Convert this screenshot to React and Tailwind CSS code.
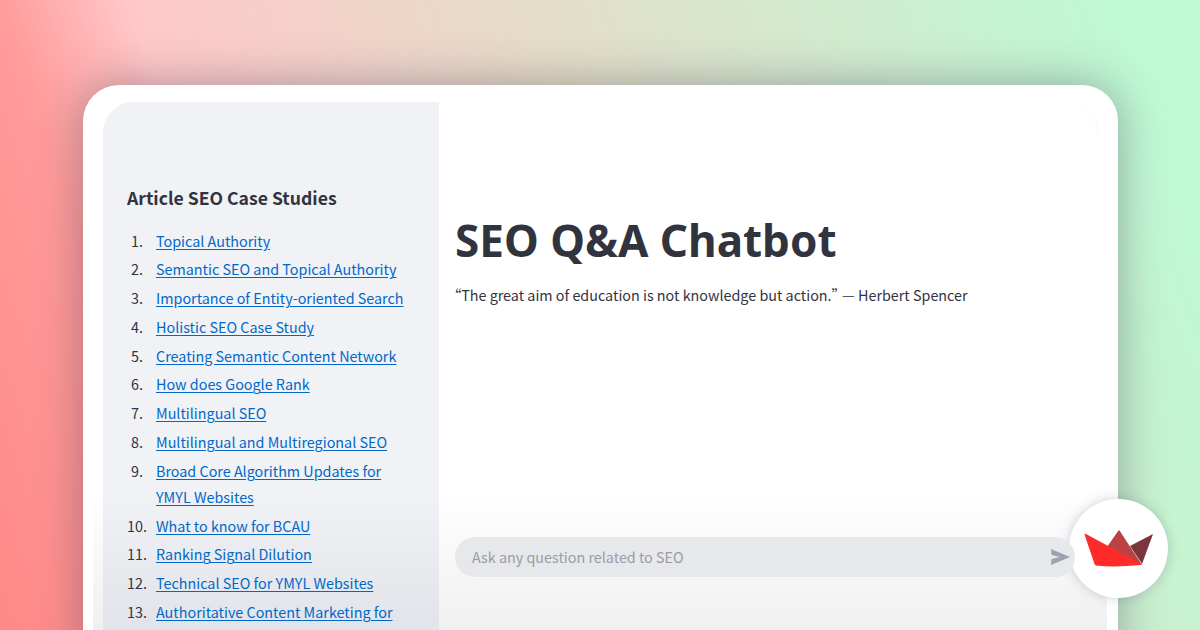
const articles = [
  ["Topical Authority"],
  ["Semantic SEO and Topical Authority"],
  ["Importance of Entity-oriented Search"],
  ["Holistic SEO Case Study"],
  ["Creating Semantic Content Network"],
  ["How does Google Rank"],
  ["Multilingual SEO"],
  ["Multilingual and Multiregional SEO"],
  ["Broad Core Algorithm Updates for", "YMYL Websites"],
  ["What to know for BCAU"],
  ["Ranking Signal Dilution"],
  ["Technical SEO for YMYL Websites"],
  ["Authoritative Content Marketing for"],
];

function Logo() {
  return (
    <svg width="70" height="40" viewBox="0 0 70 40">
      <path d="M23 18 L34.500 1.500 Q35 1 35.500 1.500 L58 36 Z" fill="#bd4043" />
      <path d="M46 17 L69 5 L58 35 Z" fill="#7d353b" />
      <path d="M0.500 5.500 Q1 4.500 2 5 L57.500 35 Q58 36 57 36 Q30 38.500 12 36.500 Q11 36 10.500 35 Z" fill="#ff2b2b" />
    </svg>
  );
}

export default function App() {
  return (
    <div className="relative h-[630px] w-[1200px] overflow-hidden bg-[linear-gradient(70deg,#ff8888_0%,#ff9c9c_16%,#ffc8c8_25%,#e6dcc8_52%,#bdfad3_95%,#bdfad3_100%)] font-['Noto_Sans_CJK_SC','Noto_Sans',sans-serif]">
      <div className="relative ml-[83px] mr-[82px] mt-[85px] h-[600px] rounded-t-[36px] bg-white pt-[17px] pl-5 shadow-[0_0_45px_rgba(60,60,80,0.42)]">
        <div className="absolute left-[10px] right-[11px] top-[405px] h-[195px] bg-[linear-gradient(180deg,rgba(40,40,60,0)_0%,rgba(40,40,60,0.075)_75%,rgba(40,40,60,0.1)_100%)]" />
        <div className="absolute right-[20px] top-[17px] h-[30px] w-[30px] rounded-tr-[30px] border-r border-[#f6f6f6]" />
        <div className="flex h-full">
          <aside className="h-full w-[336px] shrink-0 rounded-tl-[30px] bg-[#f0f2f6] pl-6 pt-[84px]">
            <h2 className="relative z-10 text-[17.600px] font-semibold leading-6 text-[#31333f]">Article SEO Case Studies</h2>
            <ol className="relative z-10 mt-[17.500px] text-[14.350px] text-[#31333f]">
              {articles.map((lines, i) => (
                <li key={i} className="mb-[2.800px] flex">
                  <span className="w-[29px] shrink-0 pr-[13px] text-right leading-[26px]">{i + 1}.</span>
                  <a href="#" className="block leading-[26px] text-[#0068c9] underline underline-offset-2">
                    {lines.map((line) => (
                      <span key={line} className="block">{line}</span>
                    ))}
                  </a>
                </li>
              ))}
            </ol>
          </aside>
          <main className="relative z-10 min-w-0 flex-1 pl-4">
            <h1 className="mt-[110px] font-['Noto_Sans',sans-serif] text-[44px] font-bold leading-[56px] text-[#31333f]">SEO Q&amp;A Chatbot</h1>
            <p className="mt-[14px] -ml-px text-[14.350px] leading-[26px] text-[#31333f] [font-feature-settings:'palt']">“The great aim of education is not knowledge but action.” — Herbert Spencer</p>
            <div className="mt-[229px] flex h-10 w-[620px] items-center justify-between rounded-[20px] bg-[#e6e8ec] pl-[17px] pr-[5px]">
              <span className="-mt-px text-[14.350px] text-[#9a9ca3]">Ask any question related to SEO</span>
              <svg width="19" height="16" viewBox="0 0 19 16">
                <path d="M0 0 L19 8 L0 16 L0.500 10 L9 8 L0.500 6 Z" fill="#9ea1b2" />
              </svg>
            </div>
          </main>
        </div>
      </div>
      <div className="absolute left-[1069px] top-[499px] flex h-[99px] w-[99px] items-center justify-center rounded-full bg-white shadow-[0_0_12px_rgba(60,70,100,0.25)]">
        <Logo />
      </div>
    </div>
  );
}
